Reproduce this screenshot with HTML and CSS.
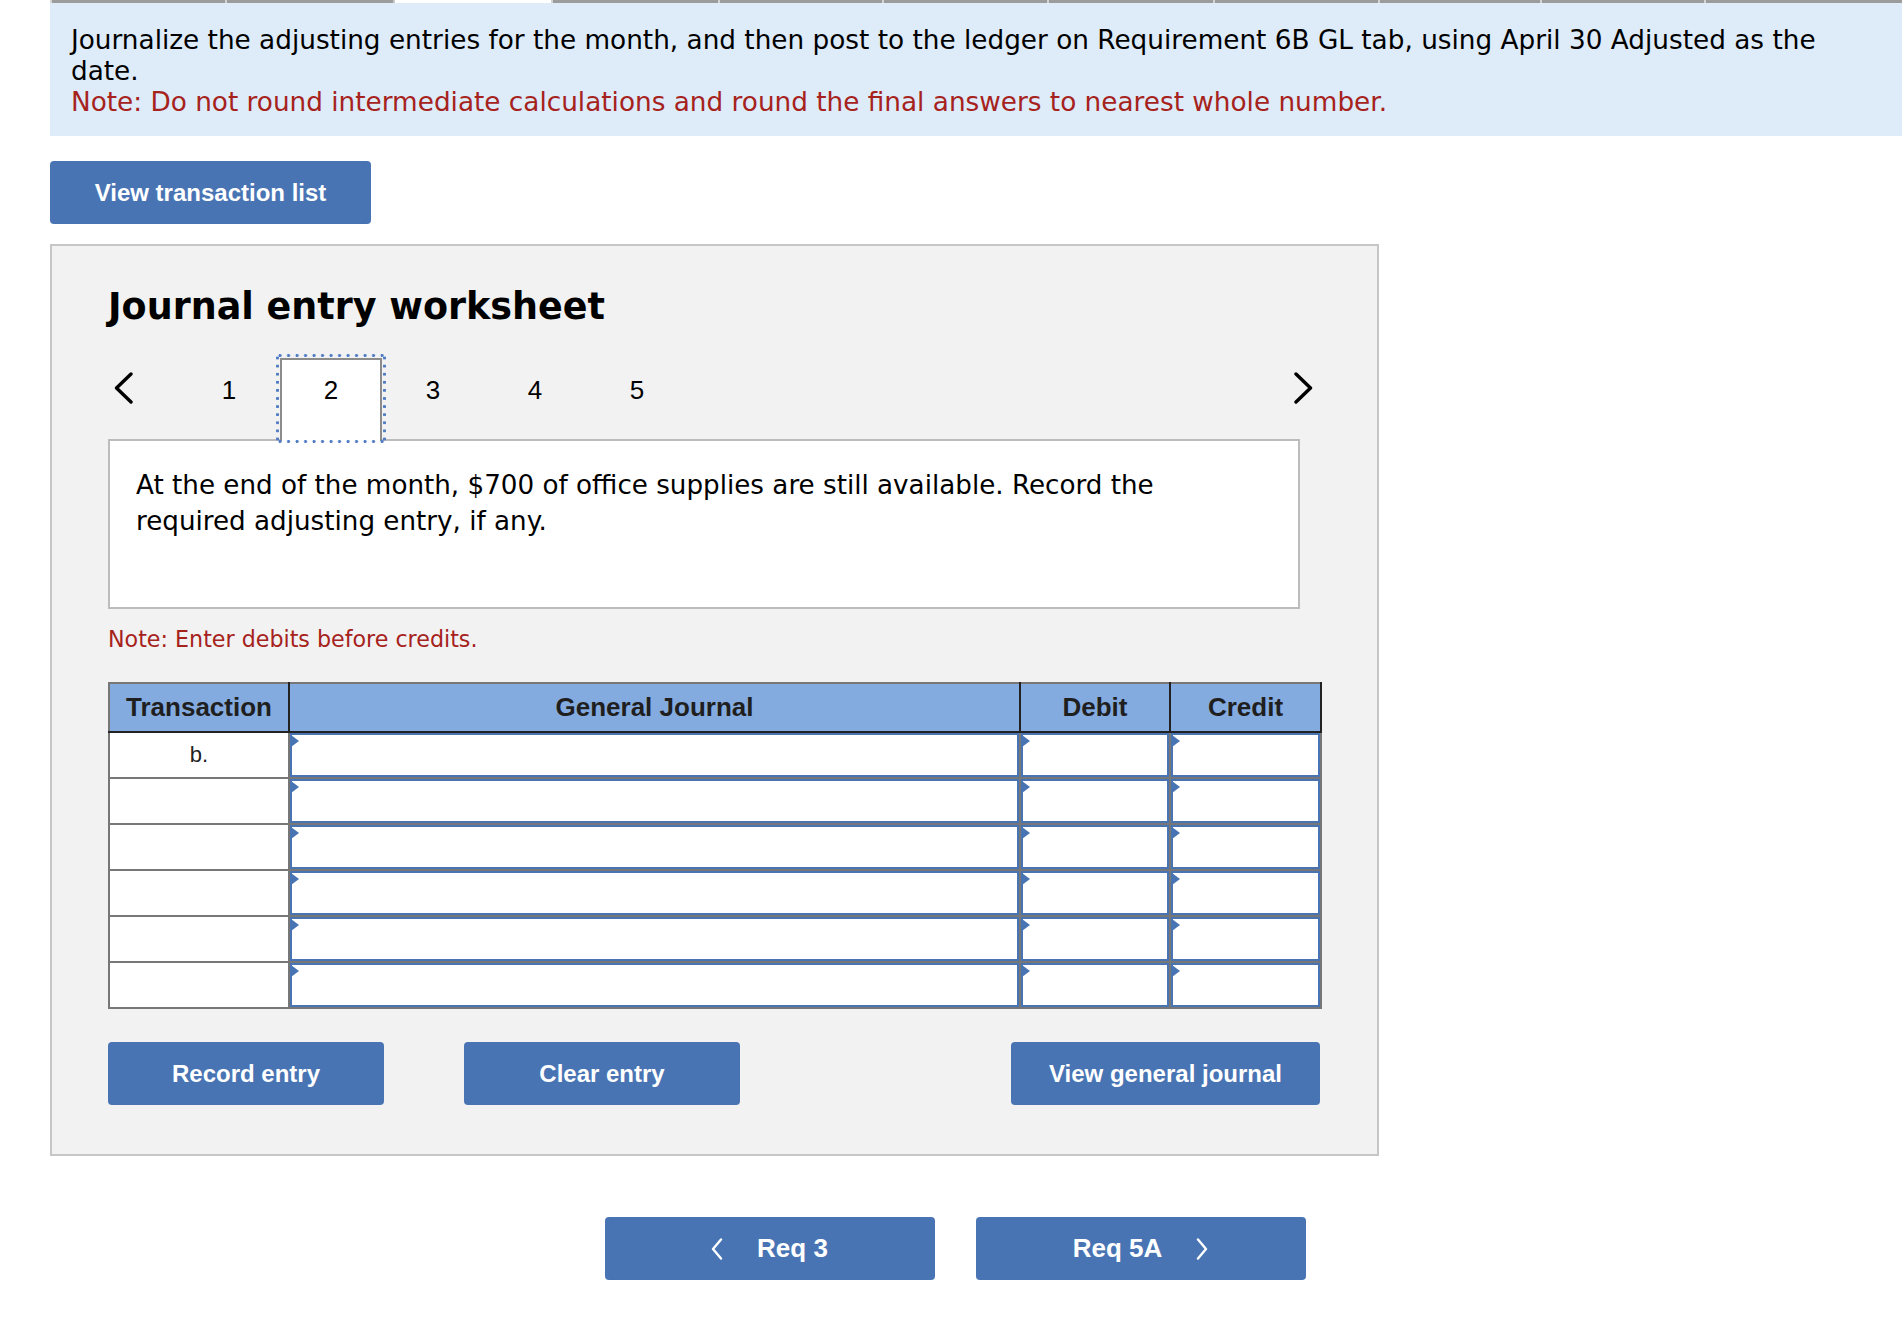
FILE: index.html
```html
<!DOCTYPE html>
<html lang="en">
<head>
<meta charset="utf-8">
<title>Journal entry worksheet</title>
<link rel="stylesheet" href="styles.css">
</head>
<body>
<div class="page">
  <div class="tabstrip">
    <span class="tab"></span><span class="tab"></span><span class="tab tab-active"></span><span class="tab"></span><span class="tab"></span><span class="tab"></span><span class="tab"></span><span class="tab"></span><span class="tab"></span><span class="tab"></span><span class="tab tab-rest"></span>
  </div>

  <div class="instructions">
    <p class="inst-text">Journalize the adjusting entries for the month, and then post to the ledger on Requirement 6B GL tab, using April 30 Adjusted as the date.</p>
    <p class="inst-note">Note: Do not round intermediate calculations and round the final answers to nearest whole number.</p>
  </div>

  <button class="btn btn-list" type="button">View transaction list</button>

  <section class="worksheet">
    <h2 class="ws-title">Journal entry worksheet</h2>

    <div class="ws-nav">
      <button class="nav-arrow nav-prev" type="button" aria-label="Previous">
        <svg width="20" height="32" viewBox="0 0 20 32"><polyline points="17,2 2.5,16 17,30" fill="none" stroke="#000" stroke-width="3.4" stroke-linecap="round" stroke-linejoin="round"/></svg>
      </button>
      <div class="steps">
        <span class="step">1</span>
        <span class="step step-active">2</span>
        <span class="step">3</span>
        <span class="step">4</span>
        <span class="step">5</span>
      </div>
      <button class="nav-arrow nav-next" type="button" aria-label="Next">
        <svg width="20" height="32" viewBox="0 0 20 32"><polyline points="3,2 17.5,16 3,30" fill="none" stroke="#000" stroke-width="3.4" stroke-linecap="round" stroke-linejoin="round"/></svg>
      </button>
    </div>

    <div class="prompt">
      <p>At the end of the month, $700 of office supplies are still available. Record the required adjusting entry, if any.</p>
    </div>

    <p class="entry-note">Note: Enter debits before credits.</p>

    <table class="journal">
      <colgroup>
        <col class="c-trans"><col class="c-gj"><col class="c-debit"><col class="c-credit">
      </colgroup>
      <thead>
        <tr><th>Transaction</th><th>General Journal</th><th>Debit</th><th>Credit</th></tr>
      </thead>
      <tbody>
        <tr><td class="trans">b.</td><td class="cell"><div class="field"></div></td><td class="cell"><div class="field"></div></td><td class="cell"><div class="field"></div></td></tr>
        <tr><td class="trans"></td><td class="cell"><div class="field"></div></td><td class="cell"><div class="field"></div></td><td class="cell"><div class="field"></div></td></tr>
        <tr><td class="trans"></td><td class="cell"><div class="field"></div></td><td class="cell"><div class="field"></div></td><td class="cell"><div class="field"></div></td></tr>
        <tr><td class="trans"></td><td class="cell"><div class="field"></div></td><td class="cell"><div class="field"></div></td><td class="cell"><div class="field"></div></td></tr>
        <tr><td class="trans"></td><td class="cell"><div class="field"></div></td><td class="cell"><div class="field"></div></td><td class="cell"><div class="field"></div></td></tr>
        <tr><td class="trans"></td><td class="cell"><div class="field"></div></td><td class="cell"><div class="field"></div></td><td class="cell"><div class="field"></div></td></tr>
      </tbody>
    </table>

    <div class="actions">
      <button class="btn btn-action" type="button">Record entry</button>
      <button class="btn btn-action" type="button">Clear entry</button>
      <button class="btn btn-gj" type="button">View general journal</button>
    </div>
  </section>

  <div class="req-nav">
    <button class="btn btn-req" type="button">
      <svg width="12" height="22" viewBox="0 0 12 22"><polyline points="10,1.5 2,11 10,20.5" fill="none" stroke="#fff" stroke-width="2.4" stroke-linecap="round" stroke-linejoin="round"/></svg>
      <span>Req 3</span>
    </button>
    <button class="btn btn-req" type="button">
      <span>Req 5A</span>
      <svg width="12" height="22" viewBox="0 0 12 22"><polyline points="2,1.5 10,11 2,20.5" fill="none" stroke="#fff" stroke-width="2.4" stroke-linecap="round" stroke-linejoin="round"/></svg>
    </button>
  </div>
</div>
</body>
</html>
```

FILE: styles.css
```css
* { box-sizing: border-box; }

html, body {
  margin: 0;
  padding: 0;
  background: #ffffff;
}

body {
  font-family: "DejaVu Sans", Verdana, sans-serif;
  color: #000;
}

.page {
  padding-left: 50px;
  padding-bottom: 40px;
}

/* top tab strip */
.tabstrip {
  display: flex;
  height: 3px;
}
.tab {
  height: 3px;
  background: #9c9c9c;
  border-left: 2px solid #d4d4d4;
  flex: 0 0 auto;
}
.tab:nth-child(1) { width: 175px; }
.tab:nth-child(2) { width: 168px; }
.tab:nth-child(3) { width: 158px; }
.tab:nth-child(4) { width: 167px; }
.tab:nth-child(5) { width: 164px; }
.tab:nth-child(6) { width: 165px; }
.tab:nth-child(7) { width: 166px; }
.tab:nth-child(8) { width: 165px; }
.tab:nth-child(9) { width: 162px; }
.tab:nth-child(10) { width: 164px; }
.tab-rest { flex: 1 1 auto; }
.tab-active { background: #ffffff; border-left-color: #c8c8c8; }

/* instructions */
.instructions {
  background: #deebf8;
  padding: 22px 0 18px 21px;
}
.inst-text,
.inst-note {
  margin: 0;
  font-size: 26.3px;
  line-height: 31px;
  max-width: 1800px;
}
.inst-note { color: #a6221c; }

/* buttons */
.btn {
  font-family: "Liberation Sans", Arial, sans-serif;
  font-weight: bold;
  font-size: 24px;
  color: #ffffff;
  background: #4874b4;
  border: none;
  border-radius: 4px;
  height: 63px;
  padding: 0;
  cursor: pointer;
}
.btn-list {
  display: block;
  margin-top: 25px;
  width: 321px;
}

/* worksheet panel */
.worksheet {
  margin-top: 20px;
  width: 1329px;
  background: #f2f2f2;
  border: 2px solid #c6c6c6;
  padding: 40px 57px 49px 56px;
}
.ws-title {
  margin: 0;
  font-family: "DejaVu Sans", Verdana, sans-serif;
  font-weight: bold;
  font-size: 36.5px;
  line-height: 42px;
}

.ws-nav {
  display: flex;
  align-items: flex-start;
  height: 81px;
  margin-top: 30px;
}
.nav-arrow {
  background: none;
  border: none;
  padding: 0;
  margin-top: 14px;
  height: 32px;
  cursor: pointer;
  display: flex;
}
.nav-prev {
  width: 70px;
  padding-left: 6px;
  justify-content: flex-start;
}
.nav-next {
  margin-left: auto;
  width: 40px;
  padding-right: 7px;
  justify-content: flex-end;
}
.steps {
  display: flex;
}
.step {
  width: 102px;
  height: 81px;
  padding-top: 17px;
  text-align: center;
  font-family: "Liberation Sans", Arial, sans-serif;
  font-size: 26px;
  line-height: 30px;
  color: #000;
}
.step-active {
  position: relative;
  z-index: 1;
  height: 83px;
  padding-top: 15px;
  background: #ffffff;
  border: 2px solid #8c8c8c;
  border-bottom: none;
}
.step-active::after {
  content: "";
  position: absolute;
  top: -6px;
  left: -6px;
  right: -6px;
  bottom: -2px;
  pointer-events: none;
  background-image:
    radial-gradient(circle, #4f7cc4 1.3px, transparent 1.8px),
    radial-gradient(circle, #4f7cc4 1.3px, transparent 1.8px),
    radial-gradient(circle, #4f7cc4 1.3px, transparent 1.8px),
    radial-gradient(circle, #4f7cc4 1.3px, transparent 1.8px);
  background-size: 8px 3px, 8px 3px, 3px 8px, 3px 8px;
  background-position: left top, left bottom, left top, right top;
  background-repeat: space no-repeat, space no-repeat, no-repeat space, no-repeat space;
}

/* prompt box */
.prompt {
  width: 1192px;
  height: 170px;
  background: #ffffff;
  border: 2px solid #bcbcbc;
  padding: 26px 100px 0 26px;
}
.prompt p {
  margin: 0;
  font-size: 26.2px;
  line-height: 36px;
}

.entry-note {
  margin: 17px 0 0;
  font-size: 22.2px;
  line-height: 26px;
  color: #a6221c;
}

/* journal table */
.journal {
  margin-top: 30px;
  width: 1212px;
  table-layout: fixed;
  border-collapse: collapse;
  font-family: "Liberation Sans", Arial, sans-serif;
  border: 2px solid #777777;
}
.c-trans { width: 180px; }
.c-gj { width: 731px; }
.c-debit { width: 150px; }
.c-credit { width: 151px; }

.journal th {
  height: 49px;
  padding: 0;
  background: #84abe0;
  color: #1f1f1f;
  font-size: 26px;
  font-weight: bold;
  text-align: center;
  border: 2px solid #222222;
  border-top-color: #777777;
}
.journal th:first-child { border-left-color: #777777; }

.journal td {
  height: 46px;
  padding: 0;
  border: 2px solid #777777;
  background: #ffffff;
}
.journal td.trans {
  text-align: center;
  font-size: 22px;
  color: #222222;
}
.field {
  position: relative;
  height: 44px;
  border: 2px solid #4874b4;
  background: #ffffff;
}
.field::before {
  content: "";
  position: absolute;
  left: -1px;
  top: 0;
  width: 0;
  height: 0;
  border-left: 8px solid #4874b4;
  border-top: 6px solid transparent;
  border-bottom: 6px solid transparent;
}

/* action buttons */
.actions {
  display: flex;
  margin-top: 33px;
}
.btn-action {
  width: 276px;
  margin-right: 80px;
}
.btn-gj {
  width: 309px;
  margin-left: auto;
}

/* requirement navigation */
.req-nav {
  display: flex;
  justify-content: center;
  gap: 41px;
  margin-top: 61px;
  padding-right: 42px;
}
.btn-req {
  width: 330px;
  font-size: 26px;
  display: flex;
  align-items: center;
  justify-content: center;
  gap: 34px;
}
.btn-req svg { display: block; }
```
